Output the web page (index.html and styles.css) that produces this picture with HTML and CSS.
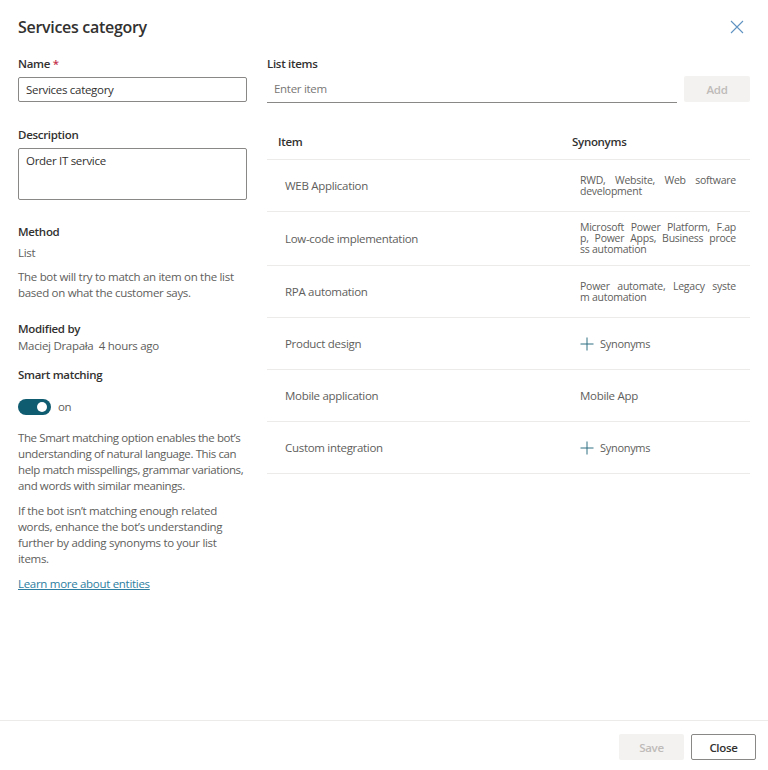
FILE: index.html
```html
<!DOCTYPE html>
<html lang="en">
<head>
<meta charset="utf-8">
<title>Services category</title>
<link rel="stylesheet" href="styles.css">
</head>
<body>
<div class="dialog">
  <header class="header">
    <h1 class="title">Services category</h1>
    <button class="close-x" aria-label="Close">
      <svg width="14" height="14" viewBox="0 0 14 14"><path d="M1 1 L13 13 M13 1 L1 13" stroke="#5f93c2" stroke-width="1.1" fill="none"/></svg>
    </button>
  </header>
  <main class="content">
    <section class="left">
      <label class="label">Name <span class="req">*</span></label>
      <div class="input">Services category</div>
      <label class="label mt-desc">Description</label>
      <div class="textarea">Order IT service</div>
      <div class="label mt-method">Method</div>
      <div class="text mt-list">List</div>
      <p class="text para mt-para1">The bot will try to match an item on the list based on what the customer says.</p>
      <div class="label mt-mod">Modified by</div>
      <div class="text mt-1">Maciej Drapała&nbsp; 4 hours ago</div>
      <div class="label mt-smart">Smart matching</div>
      <div class="toggle-row">
        <span class="toggle"><span class="knob"></span></span>
        <span class="text">on</span>
      </div>
      <p class="text para tight mt-p2">The Smart matching option enables the bot’s understanding of natural language. This can help match misspellings, grammar variations, and words with similar meanings.</p>
      <p class="text para mt-p3">If the bot isn’t matching enough related words, enhance the bot’s understanding further by adding synonyms to your list items.</p>
      <a class="link" href="#">Learn more about entities</a>
    </section>
    <section class="right">
      <label class="label">List items</label>
      <div class="add-row">
        <div class="line-input">Enter item</div>
        <button class="btn-disabled add">Add</button>
      </div>
      <div class="table">
        <div class="thead">
          <div class="th th-item">Item</div>
          <div class="th th-syn">Synonyms</div>
        </div>
        <div class="row">
          <div class="cell-item">WEB Application</div>
          <div class="cell-syn"><span class="jl">RWD, Website, Web software</span><span>development</span></div>
        </div>
        <div class="row">
          <div class="cell-item">Low-code implementation</div>
          <div class="cell-syn"><span class="jl">Microsoft Power Platform, F.ap</span><span class="jl">p, Power Apps, Business proce</span><span>ss automation</span></div>
        </div>
        <div class="row">
          <div class="cell-item">RPA automation</div>
          <div class="cell-syn"><span class="jl">Power automate, Legacy syste</span><span>m automation</span></div>
        </div>
        <div class="row">
          <div class="cell-item">Product design</div>
          <div class="cell-add"><svg width="14" height="14" viewBox="0 0 14 14"><path d="M7 0.5 V13.5 M0.5 7 H13.5" stroke="#2f6f82" stroke-width="1" fill="none"/></svg><span>Synonyms</span></div>
        </div>
        <div class="row">
          <div class="cell-item">Mobile application</div>
          <div class="cell-plain">Mobile App</div>
        </div>
        <div class="row">
          <div class="cell-item">Custom integration</div>
          <div class="cell-add"><svg width="14" height="14" viewBox="0 0 14 14"><path d="M7 0.5 V13.5 M0.5 7 H13.5" stroke="#2f6f82" stroke-width="1" fill="none"/></svg><span>Synonyms</span></div>
        </div>
      </div>
    </section>
  </main>
  <footer class="footer">
    <button class="btn-disabled save">Save</button>
    <button class="btn-close">Close</button>
  </footer>
</div>
</body>
</html>
```

FILE: styles.css
```css
* { box-sizing: border-box; }
html, body { margin: 0; padding: 0; background: #fff; }
body {
  font-family: "Open Sans", "Noto Sans", sans-serif;
  font-size: 11.5px;
  letter-spacing: -0.3px;
  color: #605e5c;
}
.dialog {
  width: 768px;
  height: 770px;
  display: flex;
  flex-direction: column;
}
.header {
  display: flex;
  justify-content: space-between;
  align-items: center;
  padding: 15px 24px 0 18px;
  height: 39px;
}
.title {
  margin: 0;
  font-size: 16px;
  line-height: 24px;
  font-weight: 600;
  letter-spacing: -0.3px;
  color: #323130;
}
.close-x {
  border: 0;
  background: none;
  padding: 0;
  width: 14px;
  height: 14px;
  display: flex;
}
.content {
  flex: 1;
  display: grid;
  grid-template-columns: 229px 483px;
  column-gap: 20px;
  padding: 17px 18px 0 18px;
  align-items: start;
}
.left, .right { display: flex; flex-direction: column; }
.label {
  display: block;
  font-size: 11.5px;
  line-height: 16px;
  font-weight: 600;
  color: #323130;
}
.req { color: #c4314b; }
.text { line-height: 16px; color: #605e5c; }
.para { margin: 0; }
.tight { letter-spacing: -0.4px; }
.input {
  margin-top: 5px;
  height: 25px;
  border: 1px solid #8a8886;
  border-radius: 2px;
  padding: 0 7px;
  line-height: 23px;
  color: #323130;
}
.textarea {
  margin-top: 5px;
  height: 52px;
  border: 1px solid #8a8886;
  border-radius: 2px;
  padding: 4px 7px;
  line-height: 16px;
  color: #323130;
}
.mt-desc { margin-top: 25px; }
.mt-method { margin-top: 24px; }
.mt-list { margin-top: 5px; }
.mt-para1 { margin-top: 8px; }
.mt-mod { margin-top: 20px; }
.mt-1 { margin-top: 1px; }
.mt-smart { margin-top: 13px; }
.toggle-row {
  margin-top: 14px;
  height: 20px;
  display: flex;
  align-items: center;
  gap: 7px;
}
.toggle {
  width: 33px;
  height: 16px;
  border-radius: 8px;
  background: #0f5b70;
  display: flex;
  align-items: center;
  justify-content: flex-end;
  padding-right: 4px;
}
.knob {
  width: 10px;
  height: 10px;
  border-radius: 50%;
  background: #fff;
}
.mt-p2 { margin-top: 13px; }
.mt-p3 { margin-top: 9px; }
.link {
  margin-top: 9px;
  line-height: 16px;
  color: #2d7ea1;
  text-decoration: underline;
}
.add-row {
  margin-top: 5px;
  display: flex;
  gap: 7px;
  align-items: flex-start;
}
.line-input {
  width: 410px;
  height: 26px;
  border-bottom: 1px solid #8a8886;
  line-height: 24px;
  padding-left: 7px;
  color: #797775;
}
.btn-disabled {
  border: 0;
  border-radius: 2px;
  background: #f3f2f1;
  color: #bebbb8;
  font-family: inherit;
  font-size: 11.5px;
  font-weight: 600;
  letter-spacing: -0.3px;
  padding: 0;
}
.add { width: 66px; height: 26px; margin-top: -1px; }
.table { margin-top: 21px; }
.thead {
  display: grid;
  grid-template-columns: 298px 185px;
  height: 36px;
  align-items: center;
  border-bottom: 1px solid #edebe9;
}
.th { font-weight: 600; color: #323130; }
.th-item { padding-left: 11px; }
.th-syn { padding-left: 7px; }
.row {
  display: grid;
  grid-template-columns: 298px 185px;
  align-items: center;
  min-height: 52px;
  padding: 10px 0;
  border-bottom: 1px solid #edebe9;
}
.cell-item { padding-left: 18px; color: #605e5c; }
.cell-syn {
  padding-left: 15px;
  padding-right: 14px;
  font-size: 10.5px;
  line-height: 11px;
  letter-spacing: -0.25px;
  color: #605e5c;
  display: flex;
  flex-direction: column;
}
.cell-syn span { display: block; white-space: nowrap; }
.cell-syn .jl { text-align: justify; text-align-last: justify; }
.cell-plain { padding-left: 15px; color: #605e5c; }
.cell-add {
  padding-left: 15px;
  display: flex;
  align-items: center;
  gap: 6px;
  font-size: 11px;
  color: #605e5c;
}
.footer {
  border-top: 1px solid #edebe9;
  height: 50px;
  padding: 13px 12px 0 0;
  display: flex;
  justify-content: flex-end;
  gap: 7px;
}
.save { width: 65px; height: 26px; }
.btn-close {
  width: 65px;
  height: 26px;
  border: 1px solid #8a8886;
  border-radius: 2px;
  background: #fff;
  color: #323130;
  font-family: inherit;
  font-size: 11.5px;
  font-weight: 600;
  letter-spacing: -0.3px;
  padding: 0;
}
```
